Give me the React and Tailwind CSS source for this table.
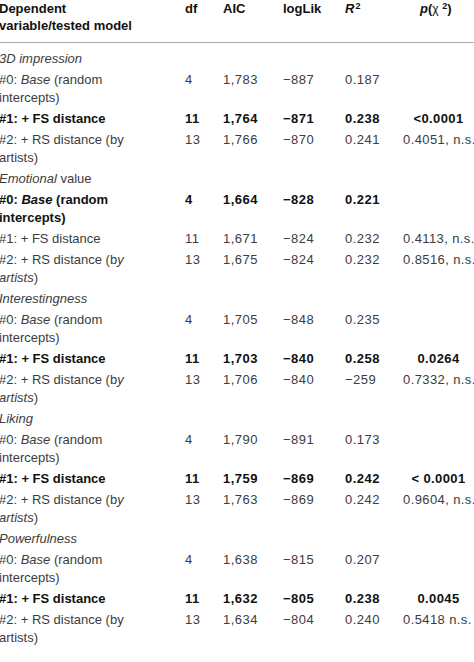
const cols = 'grid grid-cols-[185px_38px_60px_62px_58px_71px]';

const blocks = [
  {
    label: <><i>3D impression</i></>,
    rows: [
      { model: <>#0: <i>Base</i> (random intercepts)</>, df: '4', aic: '1,783', ll: '−887', r2: '0.187', p: '' },
      { bold: true, model: <>#1: + FS distance</>, df: '11', aic: '1,764', ll: '−871', r2: '0.238', p: '<0.0001' },
      { model: <>#2: + RS distance (by artists)</>, df: '13', aic: '1,766', ll: '−870', r2: '0.241', p: '0.4051, n.s.' },
    ],
  },
  {
    label: <><i>Emotional</i> value</>,
    rows: [
      { bold: true, model: <>#0: <i>Base</i> (random intercepts)</>, df: '4', aic: '1,664', ll: '−828', r2: '0.221', p: '' },
      { model: <>#1: + FS distance</>, df: '11', aic: '1,671', ll: '−824', r2: '0.232', p: '0.4113, n.s.' },
      { model: <>#2: + RS distance (b<i>y artists</i>)</>, df: '13', aic: '1,675', ll: '−824', r2: '0.232', p: '0.8516, n.s.' },
    ],
  },
  {
    label: <><i>Interestingness</i></>,
    rows: [
      { model: <>#0: <i>Base</i> (random intercepts)</>, df: '4', aic: '1,705', ll: '−848', r2: '0.235', p: '' },
      { bold: true, model: <>#1: + FS distance</>, df: '11', aic: '1,703', ll: '−840', r2: '0.258', p: '0.0264' },
      { model: <>#2: + RS distance (b<i>y artists</i>)</>, df: '13', aic: '1,706', ll: '−840', r2: '−259', p: '0.7332, n.s.' },
    ],
  },
  {
    label: <><i>Liking</i></>,
    rows: [
      { model: <>#0: <i>Base</i> (random intercepts)</>, df: '4', aic: '1,790', ll: '−891', r2: '0.173', p: '' },
      { bold: true, model: <>#1: + FS distance</>, df: '11', aic: '1,759', ll: '−869', r2: '0.242', p: '< 0.0001' },
      { model: <>#2: + RS distance (b<i>y artists</i>)</>, df: '13', aic: '1,763', ll: '−869', r2: '0.242', p: '0.9604, n.s.' },
    ],
  },
  {
    label: <><i>Powerfulness</i></>,
    rows: [
      { model: <>#0: <i>Base</i> (random intercepts)</>, df: '4', aic: '1,638', ll: '−815', r2: '0.207', p: '' },
      { bold: true, model: <>#1: + FS distance</>, df: '11', aic: '1,632', ll: '−805', r2: '0.238', p: '0.0045' },
      { model: <>#2: + RS distance (by artists)</>, df: '13', aic: '1,634', ll: '−804', r2: '0.240', p: '0.5418 n.s.' },
    ],
  },
];

function Row({ row }) {
  const tone = row.bold ? 'font-bold text-[#111]' : 'text-[#3c3c3c]';
  return (
    <div className={`${cols} py-[1.5px] ${tone}`}>
      <div className="-ml-px w-[140px]">{row.model}</div>
      <div className="tracking-[0.5px]">{row.df}</div>
      <div className="tracking-[0.5px]">{row.aic}</div>
      <div className="tracking-[0.5px]">{row.ll}</div>
      <div className="tracking-[0.5px]">{row.r2}</div>
      <div className={`whitespace-nowrap tracking-[0.4px] ${row.bold ? 'text-center' : ''}`}>{row.p}</div>
    </div>
  );
}

export default function App() {
  return (
    <div
      className="w-[474px] h-[662px] overflow-hidden bg-white text-[13px]"
      style={{ fontFamily: '"Liberation Sans", Arial, sans-serif' }}
    >
      {/* Header */}
      <div className={`${cols} font-bold text-[#111] leading-[17px] pb-2 border-b border-[#a9a9a9]`}>
        <div className="-ml-px w-[140px]">Dependent variable/tested model</div>
        <div>df</div>
        <div>AIC</div>
        <div>logLik</div>
        <div>
          <i>R</i>
          <sup className="text-[9px] leading-none ml-px">2</sup>
        </div>
        <div className="pl-[17px] whitespace-nowrap">
          <i>p</i>(<span className="font-normal text-[12px]">χ</span> <sup className="text-[9px] leading-none">2</sup>)
        </div>
      </div>

      {/* Body */}
      <div className="pt-[5px] leading-[18px]">
        {blocks.map((block, i) => (
          <div key={i}>
            <div className="py-[1.5px] -ml-px text-[#3c3c3c]">{block.label}</div>
            {block.rows.map((row, j) => (
              <Row key={j} row={row} />
            ))}
          </div>
        ))}
      </div>
    </div>
  );
}
